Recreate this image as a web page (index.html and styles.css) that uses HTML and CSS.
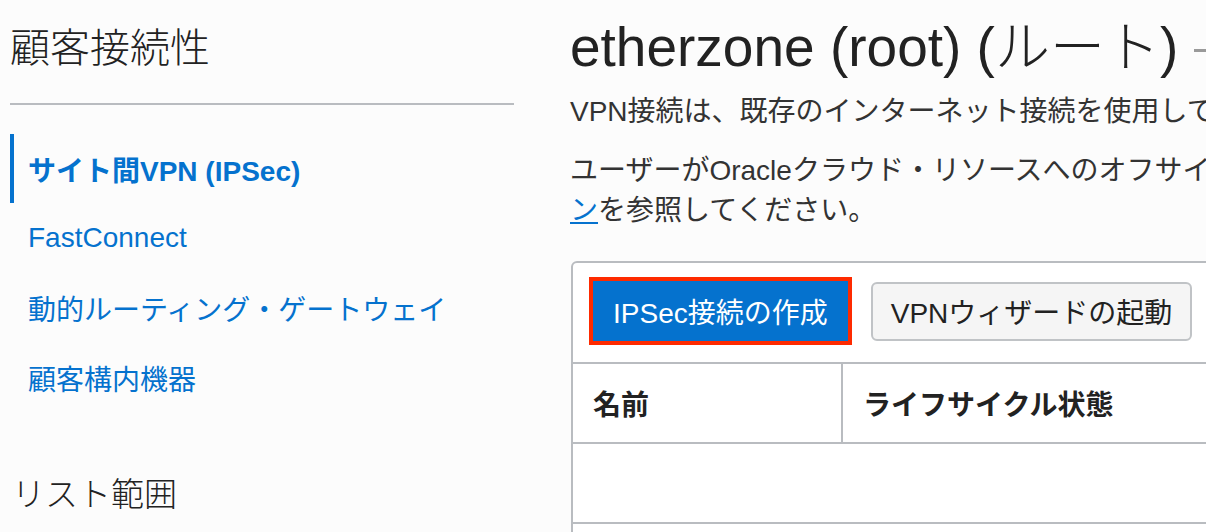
FILE: index.html
```html
<!DOCTYPE html>
<html lang="ja">
<head>
    <meta charset="UTF-8">
    <meta name="viewport" content="width=device-width, initial-scale=1.0">
    <title>サイト間VPN (IPSec)</title>
    <link rel="stylesheet" href="styles.css">
</head>
<body>
    <div class="page">
        <!-- Левое меню раздела -->
        <aside class="sidebar">
            <h2 class="sidebar-title">顧客接続性</h2>
            <ul class="side-nav">
                <li class="active"><a href="#">サイト間VPN (IPSec)</a></li>
                <li><a href="#">FastConnect</a></li>
                <li><a href="#">動的ルーティング・ゲートウェイ</a></li>
                <li><a href="#">顧客構内機器</a></li>
            </ul>
            <h3 class="scope-title">リスト範囲</h3>
        </aside>

        <!-- Основная часть -->
        <main class="content">
            <h1 class="page-title">etherzone (root) (ルート)<span class="title-more"></span></h1>
            <p class="desc">VPN接続は、既存のインターネット接続を使用してオンプレミス・ネットワークとVCNの間にセキュアな接続を提供します。</p>
            <p class="desc">ユーザーがOracleクラウド・リソースへのオフサイト・アクセスを行うには、<a href="#">ドキュメンテーショ<br>ン</a>を参照してください。</p>

            <div class="panel">
                <div class="toolbar">
                    <button class="btn btn-primary">IPSec接続の作成</button>
                    <button class="btn btn-secondary">VPNウィザードの起動</button>
                </div>
                <table class="grid">
                    <thead>
                        <tr>
                            <th class="col-name">名前</th>
                            <th>ライフサイクル状態</th>
                        </tr>
                    </thead>
                    <tbody>
                        <tr>
                            <td colspan="2"></td>
                        </tr>
                        <tr>
                            <td colspan="2"></td>
                        </tr>
                    </tbody>
                </table>
            </div>
        </main>
    </div>
</body>
</html>
```

FILE: styles.css
```css
/* Общие стили */
body, html {
    margin: 0;
    padding: 0;
    height: 100%;
    font-family: 'Liberation Sans', 'Noto Sans CJK JP', sans-serif;
    background-color: #fcfcfc;
    color: #333;
    overflow: hidden;
}

.page {
    display: grid;
    grid-template-columns: 504px 900px;
    column-gap: 56px;
    padding-left: 10px;
}

/* Меню слева */
.sidebar-title {
    font-size: 40px;
    font-weight: 300;
    color: #222;
    margin: 23px 0 0;
    padding-bottom: 30px;
    line-height: 50px;
    border-bottom: 2px solid #b9bcc0;
}

.side-nav {
    list-style: none;
    margin: 29px 0 0;
    padding: 0;
}

.side-nav li {
    height: 70px;
    display: flex;
    align-items: center;
    padding-left: 18px;
}

.side-nav li.active {
    height: 69px;
    border-left: 4px solid #0572ce;
    padding-left: 14px;
}

.side-nav a {
    color: #0572ce;
    text-decoration: none;
    font-size: 28px;
}

.side-nav li.active a {
    font-weight: bold;
}

.scope-title {
    font-size: 33px;
    font-weight: 300;
    color: #222;
    margin: 62px 0 0 2px;
    line-height: 40px;
}

/* Основная часть */
.page-title {
    font-size: 55px;
    font-weight: 300;
    color: #222;
    margin: 14px 0 0;
    line-height: 66px;
    white-space: nowrap;
}

.title-more {
    display: inline-block;
    width: 12px;
    height: 3px;
    margin-left: 16px;
    vertical-align: 14px;
    background-color: #9a9a9a;
}

.desc {
    font-size: 28px;
    line-height: 40px;
    margin: 12px 0 0;
    white-space: nowrap;
}

.desc + .desc {
    margin-top: 19px;
}

.desc a {
    color: #0572ce;
}

/* Панель с таблицей */
.panel {
    margin-top: 30px;
    margin-left: 1px;
    background-color: #fff;
    border: 2px solid #b9bcc0;
    border-radius: 6px;
}

.toolbar {
    display: flex;
    gap: 23px;
    align-items: center;
    padding: 18px 20px 21px;
}

.btn {
    font-family: inherit;
    font-size: 28px;
    height: 60px;
    padding: 0 19px;
    border-radius: 0;
    cursor: pointer;
}

.btn-primary {
    background-color: #0572ce;
    color: #fff;
    border: 1px solid #0572ce;
    outline: 4px solid #fe2a00;
}

.btn-secondary {
    height: 59px;
    background-color: #f5f5f5;
    color: #222;
    border: 2px solid #c0c3c6;
    border-radius: 6px;
    padding: 0 18px;
}

.grid {
    width: 100%;
    border-collapse: collapse;
}

.grid th,
.grid td {
    height: 78px;
    border-top: 2px solid #b9bcc0;
    text-align: left;
    font-size: 28px;
    padding: 0 20px;
    color: #222;
}

.grid th.col-name {
    width: 228px;
    border-right: 2px solid #b9bcc0;
}
```
